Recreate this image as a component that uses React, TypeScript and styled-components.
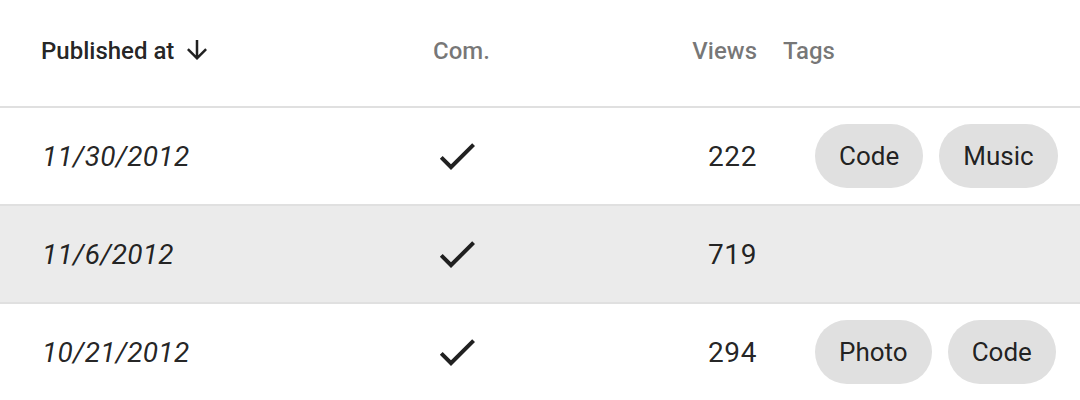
import React from "react";
import styled, { createGlobalStyle } from "styled-components";

const GlobalStyle = createGlobalStyle`
  html, body { margin: 0; padding: 0; background: #ffffff; }
  body { font-family: Roboto, "Noto Sans", Arial, sans-serif; }
`;

const Table = styled.div`
  width: 1080px;
  display: flex;
  flex-direction: column;
`;

const Row = styled.div<{ $header?: boolean; $shaded?: boolean }>`
  display: grid;
  grid-template-columns: 433px 250px 74px 1fr;
  align-items: center;
  height: ${(p) => (p.$header ? "106px" : "96px")};
  border-bottom: 2px solid #e0e0e0;
  background: ${(p) => (p.$shaded ? "#ebebeb" : "#ffffff")};
`;

const HeadCell = styled.div<{ $active?: boolean; $align?: string; $pad?: number }>`
  display: flex;
  align-items: center;
  justify-content: ${(p) => (p.$align === "right" ? "flex-end" : "flex-start")};
  padding-left: ${(p) => p.$pad ?? 0}px;
  margin-top: -4px;
  font-size: 24px;
  font-weight: 500;
  color: ${(p) => (p.$active ? "rgba(0,0,0,0.87)" : "rgba(0,0,0,0.54)")};
`;

const SortIcon = styled.svg`
  width: 30px;
  height: 30px;
  margin-left: 8px;
  margin-top: -2px;
  fill: rgba(0, 0, 0, 0.87);
`;

const DateCell = styled.div`
  padding-left: 42px;
  font-size: 28px;
  letter-spacing: 0.3px;
  font-style: italic;
  color: rgba(0, 0, 0, 0.87);
`;

const IconCell = styled.div`
  display: flex;
  align-items: center;
`;

const CheckIcon = styled.svg`
  width: 48px;
  height: 48px;
  fill: rgba(0, 0, 0, 0.87);
`;

const NumberCell = styled.div`
  text-align: right;
  font-size: 28px;
  letter-spacing: 0.6px;
  color: rgba(0, 0, 0, 0.87);
`;

const ChipList = styled.div`
  display: flex;
  gap: 16px;
  padding-left: 58px;
`;

const Chip = styled.span`
  display: inline-flex;
  align-items: center;
  height: 64px;
  padding: 0 24px;
  border-radius: 32px;
  background: #e0e0e0;
  font-size: 26px;
  color: rgba(0, 0, 0, 0.87);
  white-space: nowrap;
`;

const rows = [
  { date: "11/30/2012", views: 222, tags: ["Code", "Music"] },
  { date: "11/6/2012", views: 719, tags: [] as string[] },
  { date: "10/21/2012", views: 294, tags: ["Photo", "Code"] },
];

export default function App() {
  return (
    <>
      <GlobalStyle />
      <Table>
        <Row $header>
          <HeadCell $active $pad={41}>
            Published at
            <SortIcon viewBox="0 0 24 24">
              <path d="M20 12l-1.41-1.41L13 16.17V4h-2v12.17l-5.58-5.59L4 12l8 8 8-8z" />
            </SortIcon>
          </HeadCell>
          <HeadCell>Com.</HeadCell>
          <HeadCell $align="right">Views</HeadCell>
          <HeadCell $pad={26}>Tags</HeadCell>
        </Row>
        {rows.map((r, i) => (
          <Row key={r.date} $shaded={i === 1}>
            <DateCell>{r.date}</DateCell>
            <IconCell>
              <CheckIcon viewBox="0 0 24 24">
                <path d="M9 16.17L4.83 12l-1.42 1.41L9 19 21 7l-1.41-1.41z" />
              </CheckIcon>
            </IconCell>
            <NumberCell>{r.views}</NumberCell>
            <ChipList>
              {r.tags.map((t) => (
                <Chip key={t}>{t}</Chip>
              ))}
            </ChipList>
          </Row>
        ))}
      </Table>
    </>
  );
}
